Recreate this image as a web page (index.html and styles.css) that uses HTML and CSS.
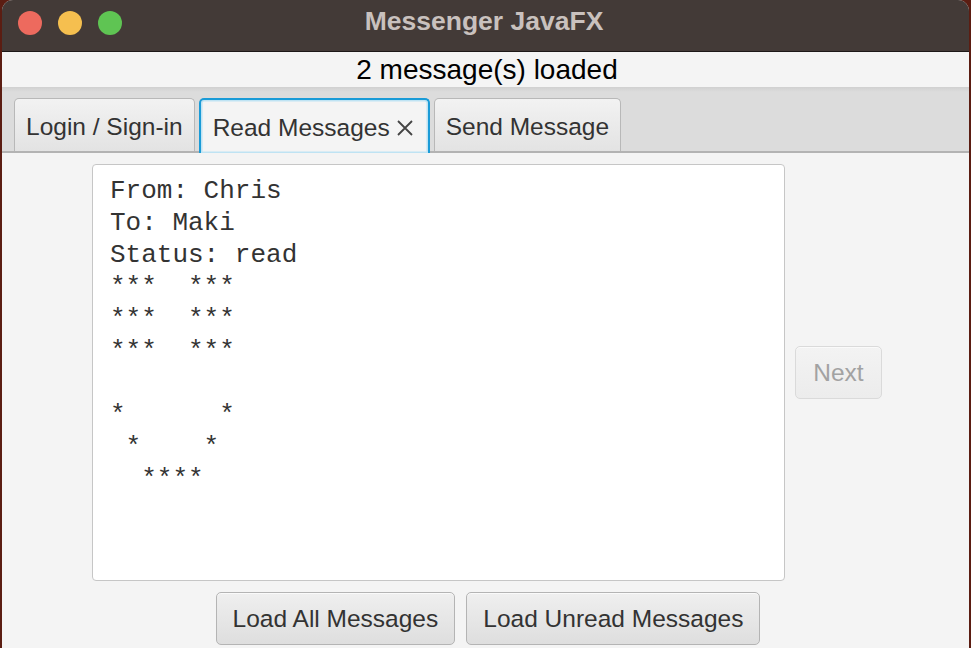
FILE: index.html
```html
<!DOCTYPE html>
<html>
<head>
<meta charset="utf-8">
<link rel="stylesheet" href="styles.css">
</head>
<body>
<div class="window">
  <div class="titlebar">
    <div class="lights">
      <span class="light red"></span>
      <span class="light yellow"></span>
      <span class="light green"></span>
    </div>
    <div class="title">Messenger JavaFX</div>
  </div>
  <div class="status">2 message(s) loaded</div>
  <div class="tabbar">
    <div class="tab">Login / Sign-in</div>
    <div class="tab active">Read Messages
      <svg class="close" width="16" height="16" viewBox="0 0 16 16"><path d="M1 1 L15 15 M15 1 L1 15" stroke="#444" stroke-width="1.8" fill="none"/></svg>
    </div>
    <div class="tab">Send Message</div>
  </div>
  <div class="content">
    <div class="row">
      <div class="textarea"><pre>From: Chris
To: Maki
Status: read
***  ***
***  ***
***  ***

*      *
 *    *
  ****</pre></div>
      <button class="btn next" disabled>Next</button>
    </div>
    <div class="actions">
      <button class="btn">Load All Messages</button>
      <button class="btn">Load Unread Messages</button>
    </div>
  </div>
</div>
</body>
</html>
```
FILE: styles.css
```css
html, body {
  margin: 0;
  padding: 0;
  width: 971px;
  height: 648px;
  overflow: hidden;
  background: #5b1d12;
}
.window {
  margin-left: 2px;
  width: 967px;
  height: 660px;
  background: #f4f4f4;
  border-radius: 11px 11px 0 0;
  overflow: hidden;
  display: flex;
  flex-direction: column;
  font-family: "Liberation Sans", Arial, sans-serif;
  color: #333;
}
.titlebar {
  height: 51px;
  flex: none;
  background: #433a37;
  border-bottom: 1px solid #1d1817;
  position: relative;
  display: flex;
  align-items: center;
  justify-content: center;
}
.lights {
  position: absolute;
  left: 16px;
  top: 11px;
  display: flex;
  gap: 16px;
}
.light {
  width: 24px;
  height: 24px;
  border-radius: 50%;
  display: block;
}
.red { background: #ed6a5e; }
.yellow { background: #f5bf4f; }
.green { background: #5fc453; }
.title {
  color: #c9c1be;
  font-weight: bold;
  font-size: 26.5px;
  margin-top: -8px;
  margin-left: -3px;
}
.status {
  height: 35px;
  flex: none;
  text-align: center;
  font-size: 28px;
  line-height: 36px;
  color: #000;
  background: #f4f4f4;
  padding-left: 3px;
}
.tabbar {
  height: 66px;
  flex: none;
  background: linear-gradient(#d0d0d0, #dcdcdc 5px, #dcdcdc);
  border-bottom: 2px solid #b3b3b3;
  box-sizing: border-box;
  display: flex;
  align-items: flex-end;
  padding-left: 12px;
  gap: 4px;
}
.tab {
  height: 53px;
  box-sizing: border-box;
  padding: 4px 11px 0 11px;
  display: flex;
  align-items: center;
  font-size: 24.5px;
  border: 1.5px solid #b8b8b8;
  border-bottom: none;
  border-radius: 5px 5px 0 0;
  background: linear-gradient(#f2f2f2, #e3e3e3);
  color: #333;
}
.tab.active {
  background: #f4f4f4;
  border: 2px solid #1a9bd7;
  border-bottom: none;
  box-shadow: inset 0 0 0 1.5px #bfe3f3;
  height: 55px;
  margin-bottom: -2px;
  gap: 7px;
  padding: 2px 15px 0 12px;
}
.close { display: block; margin-top: 1px; }
.content {
  flex: 1;
  display: flex;
  flex-direction: column;
  padding-top: 11px;
}
.row {
  display: flex;
  align-items: center;
  padding-left: 90px;
  gap: 10px;
}
.textarea {
  width: 693px;
  height: 417px;
  box-sizing: border-box;
  background: #fff;
  border: 1.5px solid #c6c6c6;
  border-radius: 4px;
  padding: 10px 17px;
}
.textarea pre {
  margin: 0;
  font-family: "Liberation Mono", "Courier New", monospace;
  font-size: 26px;
  line-height: 32px;
  color: #333;
}
.btn {
  font-family: "Liberation Sans", Arial, sans-serif;
  font-size: 24.5px;
  color: #333;
  height: 53px;
  padding: 0 16px;
  border: 1.5px solid #b4b4b4;
  border-radius: 5px;
  background: linear-gradient(#efefef, #dedede);
  box-shadow: inset 0 1px 0 #fafafa;
}
.btn.next {
  width: 87px;
  height: 53px;
  padding: 0;
  color: #a2a2a2;
  border-color: #dadada;
  background: linear-gradient(#f3f3f3, #ececec);
}
.actions {
  display: flex;
  justify-content: center;
  gap: 11px;
  margin-top: 11px;
  padding-left: 5px;
}
```
